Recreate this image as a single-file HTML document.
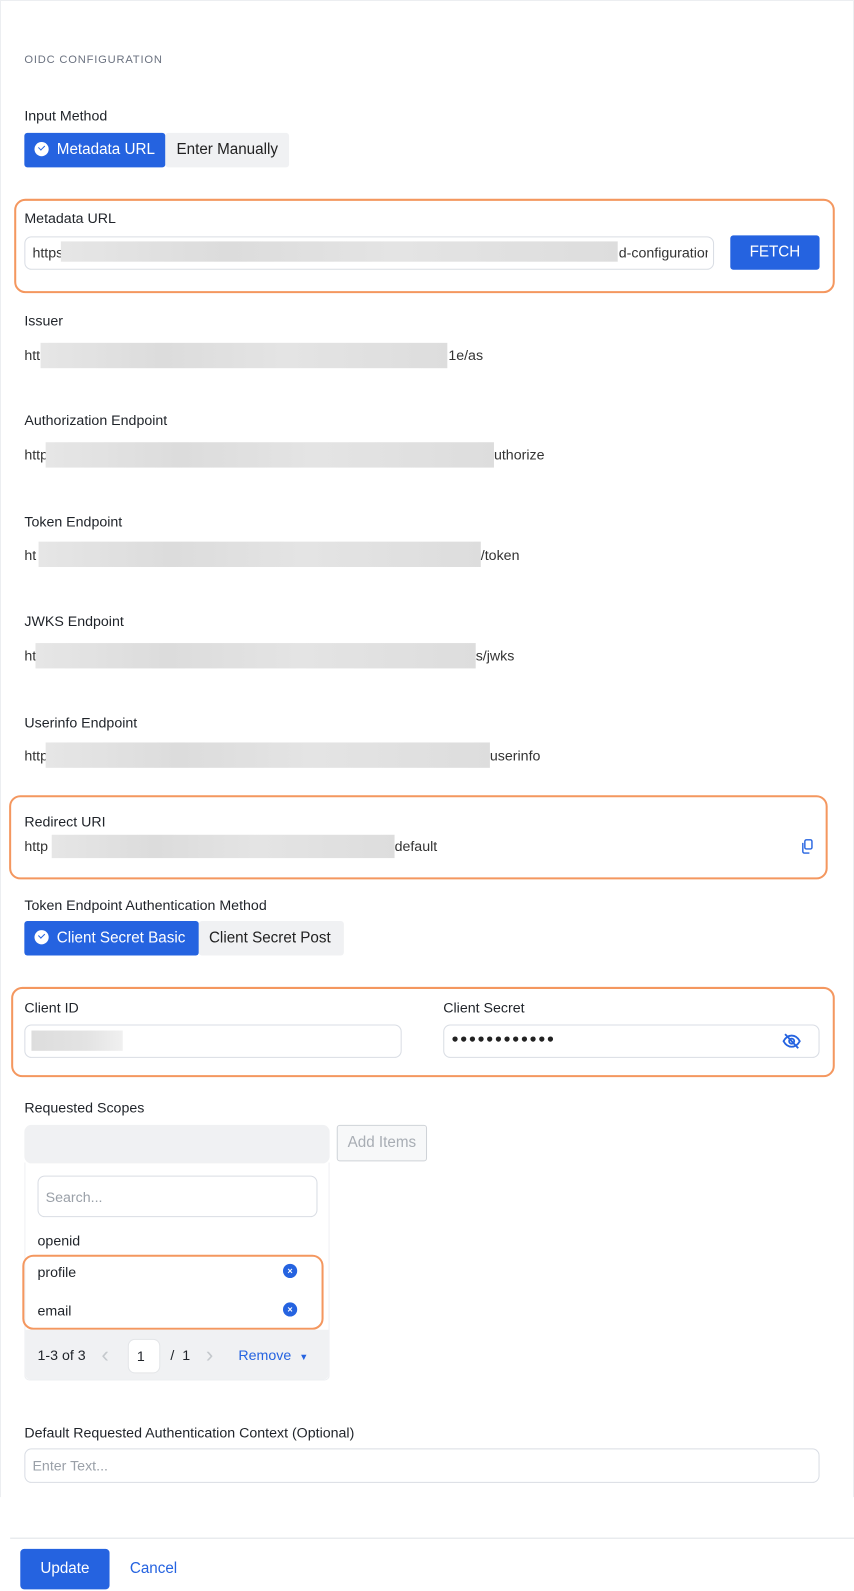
<!DOCTYPE html>
<html><head><meta charset="utf-8"><style>
*{box-sizing:border-box;margin:0;padding:0}
body{width:854px;height:1591px;background:#fff;font-family:"Liberation Sans",sans-serif;color:#1f2329;position:relative;overflow:hidden;font-size:14px}
#w{position:absolute;left:0;top:0;width:842px;height:1569px;transform:scale(1.0143);transform-origin:0 0}
.a{position:absolute}
.lbl{position:absolute;left:24px;font-size:14px;color:#1f2329;line-height:16px}
.val{position:absolute;left:24px;font-size:14px;line-height:16px;color:#333}
.blur{position:absolute;background:linear-gradient(90deg,#e6e6e6,#dcdcdc 30%,#e4e4e4 60%,#dddddd);}
.ob{position:absolute;border:2px solid #f4975f;border-radius:11px}
.inp{position:absolute;border:1px solid #d9dde4;border-radius:7px;background:#fff}
.seg{position:absolute;height:34px;font-size:15px;line-height:34px;border-radius:3px}
.chk{display:inline-block;width:14px;height:14px;border-radius:50%;background:#fff;vertical-align:-2px;margin-right:8px;position:relative}
.chk:after{content:"";position:absolute;left:4px;top:3px;width:5px;height:3px;border-left:1.5px solid #2563e0;border-bottom:1.5px solid #2563e0;transform:rotate(-45deg)}
.x{position:absolute;width:14px;height:14px;border-radius:50%;background:#2563e0;color:#fff;font-size:9px;line-height:14px;text-align:center;font-weight:bold}
</style></head><body><div id="w">
<div class="a" style="left:0;top:0;width:842px;height:1476px;border:1px solid #eceef1;border-bottom:none"></div>
<div class="a" style="left:24px;top:53px;font-size:11px;color:#6b7280;letter-spacing:0.8px">OIDC CONFIGURATION</div>
<div class="lbl" style="top:106px">Input Method</div>
<div class="seg" style="left:24px;top:131px;width:139px;background:#2563e0;color:#fff;padding-left:10px"><span class="chk"></span>Metadata URL</div>
<div class="seg" style="left:163px;top:131px;width:122px;background:#f0f1f3;padding-left:11px;color:#222">Enter Manually</div>

<div class="ob" style="left:14px;top:196px;width:809px;height:93px"></div>
<div class="lbl" style="top:207px">Metadata URL</div>
<div class="inp" style="left:24px;top:233px;width:680px;height:33px"></div>
<div class="val" style="left:32px;top:241px">https</div>
<div class="blur" style="left:60px;top:238px;width:549px;height:20px"></div>
<div class="val" style="left:610px;top:241px;width:88px;overflow:hidden;white-space:nowrap">d-configuration</div>
<div class="a" style="left:720px;top:232px;width:88px;height:34px;background:#2563e0;color:#fff;border-radius:3px;text-align:center;line-height:34px;font-size:15px">FETCH</div>

<div class="lbl" style="top:308px">Issuer</div>
<div class="val" style="top:342px">htt</div><div class="blur" style="left:40px;top:338px;width:401px;height:25px"></div><div class="val" style="left:442px;top:342px">1e/as</div>
<div class="lbl" style="top:406px">Authorization Endpoint</div>
<div class="val" style="top:440px">http</div><div class="blur" style="left:45px;top:436px;width:442px;height:25px"></div><div class="val" style="left:487px;top:440px">uthorize</div>
<div class="lbl" style="top:506px">Token Endpoint</div>
<div class="val" style="top:539px">ht</div><div class="blur" style="left:38px;top:534px;width:436px;height:25px"></div><div class="val" style="left:474px;top:539px">/token</div>
<div class="lbl" style="top:604px">JWKS Endpoint</div>
<div class="val" style="top:638px">ht</div><div class="blur" style="left:35px;top:634px;width:434px;height:25px"></div><div class="val" style="left:469px;top:638px">s/jwks</div>
<div class="lbl" style="top:704px">Userinfo Endpoint</div>
<div class="val" style="top:737px">http</div><div class="blur" style="left:45px;top:732px;width:438px;height:25px"></div><div class="val" style="left:483px;top:737px">userinfo</div>

<div class="ob" style="left:9px;top:784px;width:807px;height:83px"></div>
<div class="lbl" style="top:802px">Redirect URI</div>
<div class="val" style="top:826px">http</div><div class="blur" style="left:51px;top:823px;width:338px;height:23px"></div><div class="val" style="left:389px;top:826px">default</div>
<svg class="a" style="left:789px;top:827px" width="14" height="15" viewBox="0 0 14 15" fill="none" stroke="#2563e0" stroke-width="1.4"><rect x="4.5" y="1" width="7" height="9" rx="1.5"/><path d="M2.5 4v8.5a1.5 1.5 0 0 0 1.5 1.5h5"/></svg>

<div class="lbl" style="top:884px">Token Endpoint Authentication Method</div>
<div class="seg" style="left:24px;top:908px;width:172px;background:#2563e0;color:#fff;padding-left:10px"><span class="chk"></span>Client Secret Basic</div>
<div class="seg" style="left:196px;top:908px;width:143px;background:#f0f1f3;padding-left:10px;color:#222">Client Secret Post</div>

<div class="ob" style="left:11px;top:973px;width:812px;height:89px"></div>
<div class="lbl" style="top:985px">Client ID</div>
<div class="lbl" style="left:437px;top:985px">Client Secret</div>
<div class="inp" style="left:24px;top:1010px;width:372px;height:33px"></div>
<div class="blur" style="left:31px;top:1016px;width:90px;height:20px;background:linear-gradient(90deg,#ddd,#e3e3e3 60%,#f0f0f0)"></div>
<div class="inp" style="left:437px;top:1010px;width:371px;height:33px"></div>
<div class="a" style="left:445px;top:1017px;font-size:12px;letter-spacing:1.3px;color:#222">●●●●●●●●●●●●</div>
<svg class="a" style="left:771px;top:1018px" width="19" height="17" viewBox="0 0 19 17" fill="none" stroke="#2563e0" stroke-width="1.8"><path d="M1.5 8.5C4 4 7 3 9.5 3s5.5 1 8 5.5c-2.5 4.5-5.5 5.5-8 5.5s-5.5-1-8-5.5z"/><circle cx="9.5" cy="8.5" r="2.5"/><path d="M3 1.5l13 14"/></svg>

<div class="lbl" style="top:1084px">Requested Scopes</div>
<div class="a" style="left:24px;top:1109px;width:301px;height:38px;background:#f0f1f3;border-radius:7px"></div>
<div class="a" style="left:332px;top:1109px;width:89px;height:36px;border:1px solid #cfd3d8;border-radius:3px;background:#f7f8f9;color:#a8adb4;font-size:15px;line-height:34px;text-align:center">Add Items</div>
<div class="a" style="left:24px;top:1146px;width:301px;height:215px;border:1px solid #eceef1;border-top:none;border-radius:0 0 5px 5px"></div>
<div class="inp" style="left:37px;top:1159px;width:276px;height:41px"></div>
<div class="a" style="left:45px;top:1172px;color:#9aa0a8;font-size:14px">Search...</div>
<div class="a" style="left:37px;top:1215px;font-size:14px">openid</div>
<div class="ob" style="left:22px;top:1237px;width:297px;height:74px"></div>
<div class="a" style="left:37px;top:1246px;font-size:14px">profile</div>
<div class="x" style="left:279px;top:1246px">×</div>
<div class="a" style="left:37px;top:1284px;font-size:14px">email</div>
<div class="x" style="left:279px;top:1284px">×</div>
<div class="a" style="left:25px;top:1311px;width:299px;height:49px;background:#f0f1f3;border-radius:0 0 5px 5px"></div>
<div class="a" style="left:37px;top:1328px;font-size:14px">1-3 of 3</div>
<div class="a" style="left:100px;top:1323px;color:#c4c8cc;font-size:22px">‹</div>
<div class="a" style="left:126px;top:1320px;width:32px;height:34px;background:#fff;border-radius:7px;border:1px solid #e3e5e8;font-size:14px;padding:8px 0 0 8px">1</div>
<div class="a" style="left:168px;top:1328px;font-size:14px">/ &nbsp;1</div>
<div class="a" style="left:203px;top:1323px;color:#c4c8cc;font-size:22px">›</div>
<div class="a" style="left:235px;top:1328px;font-size:14px;color:#2563e0">Remove <span style="font-size:9px;margin-left:4px">▼</span></div>

<div class="lbl" style="top:1404px">Default Requested Authentication Context (Optional)</div>
<div class="inp" style="left:24px;top:1428px;width:784px;height:34px"></div>
<div class="a" style="left:32px;top:1437px;color:#9aa0a8;font-size:14px">Enter Text...</div>

<div class="a" style="left:10px;top:1516px;width:844px;height:1px;background:#dfe2e6"></div>
<div class="a" style="left:20px;top:1527px;width:88px;height:40px;background:#2563e0;border-radius:4px;color:#fff;font-size:15px;text-align:center;line-height:40px">Update</div>
<div class="a" style="left:128px;top:1538px;color:#2563e0;font-size:15px">Cancel</div>
</div></body></html>
